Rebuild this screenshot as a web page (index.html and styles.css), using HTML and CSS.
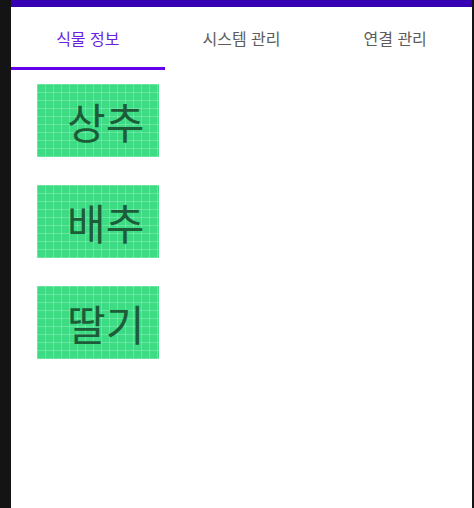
FILE: index.html
```html
<!DOCTYPE html>
<html lang="ko">
<head>
<meta charset="utf-8">
<title>식물 정보</title>
<link rel="stylesheet" href="styles.css">
</head>
<body>
<div class="screen">
  <div class="status-bar"></div>
  <nav class="tabs">
    <div class="tab active">식물 정보</div>
    <div class="tab">시스템 관리</div>
    <div class="tab">연결 관리</div>
  </nav>
  <main class="plant-list">
    <div class="plant">상추</div>
    <div class="plant">배추</div>
    <div class="plant">딸기</div>
  </main>
</div>
</body>
</html>
```
FILE: styles.css
```css
html, body {
  margin: 0;
  padding: 0;
  height: 100%;
}

body {
  background: #141414;
  font-family: "Noto Sans CJK KR", "Noto Sans", sans-serif;
  overflow: hidden;
}

.screen {
  margin-left: 11px;
  width: 461px;
  height: 508px;
  background: #ffffff;
  display: flex;
  flex-direction: column;
}

.status-bar {
  height: 7px;
  background: #3700b3;
}

.tabs {
  display: grid;
  grid-template-columns: repeat(3, 1fr);
  height: 63px;
}

.tab {
  display: flex;
  align-items: center;
  justify-content: center;
  font-size: 16px;
  color: #5c5c5c;
  border-bottom: 3px solid transparent;
  padding-top: 2px;
}

.tab.active {
  color: #6a1fe0;
  border-bottom-color: #6200ee;
}

.plant-list {
  display: flex;
  flex-direction: column;
  gap: 28px;
  padding: 14px 0 0 26px;
}

.plant {
  width: 122px;
  height: 73px;
  box-sizing: border-box;
  padding-left: 30px;
  display: flex;
  align-items: center;
  font-size: 42px;
  color: #1d5c38;
  background-color: #3ddc84;
  background-image:
    repeating-linear-gradient(90deg, rgba(255,255,255,0.22) 0 1px, transparent 1px 8px),
    repeating-linear-gradient(0deg, rgba(255,255,255,0.22) 0 1px, transparent 1px 8px);
}
```
